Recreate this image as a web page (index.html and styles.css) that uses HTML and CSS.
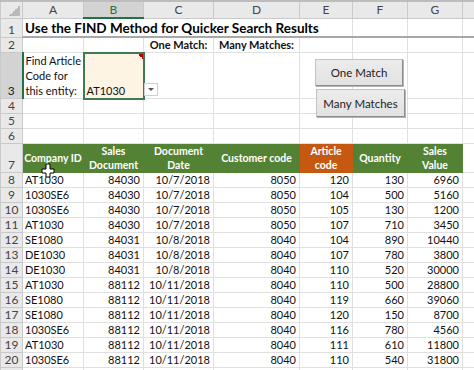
FILE: index.html
```html
<!DOCTYPE html>
<html lang="en">
<head>
    <meta charset="UTF-8">
    <title>FIND Method</title>
    <link rel="stylesheet" href="styles.css">
</head>
<body>
    <div class="sheet">
        <table class="grid">
            <colgroup>
                <col class="w-rh"><col class="w-a"><col class="w-b"><col class="w-c"><col class="w-d">
                <col class="w-e"><col class="w-f"><col class="w-g"><col class="w-h">
            </colgroup>
            <thead>
                <tr class="r-head">
                    <th class="corner"></th>
                    <th class="colh">A</th>
                    <th class="colh sel">B</th>
                    <th class="colh">C</th>
                    <th class="colh">D</th>
                    <th class="colh">E</th>
                    <th class="colh">F</th>
                    <th class="colh">G</th>
                    <th class="colh"></th>
                </tr>
            </thead>
            <tbody>
                <tr class="r-title">
                    <th class="rowh">1</th>
                    <td colspan="5" class="title">Use the FIND Method for Quicker Search Results</td>
                    <td></td><td></td><td></td>
                </tr>
                <tr class="r-std">
                    <th class="rowh">2</th>
                    <td></td><td></td>
                    <td class="label">One Match:</td>
                    <td class="label">Many Matches:</td>
                    <td></td><td></td><td></td><td></td>
                </tr>
                <tr class="r-input">
                    <th class="rowh sel">3</th>
                    <td class="wrap">Find Article<br>Code for<br>this entity:</td>
                    <td class="input">AT1030</td>
                    <td></td><td></td><td></td><td></td><td></td><td></td>
                </tr>
                <tr class="r-std">
                    <th class="rowh">4</th>
                    <td></td><td></td><td></td><td></td><td></td><td></td><td></td><td></td>
                </tr>
                <tr class="r-std">
                    <th class="rowh">5</th>
                    <td></td><td></td><td></td><td></td><td></td><td></td><td></td><td></td>
                </tr>
                <tr class="r-short">
                    <th class="rowh">6</th>
                    <td></td><td></td><td></td><td></td><td></td><td></td><td></td><td></td>
                </tr>
                <tr class="r-hdr">
                    <th class="rowh">7</th>
                    <td class="hd">Company ID</td>
                    <td class="hd">Sales<br>Document</td>
                    <td class="hd">Document<br>Date</td>
                    <td class="hd">Customer code</td>
                    <td class="hd key">Article<br>code</td>
                    <td class="hd">Quantity</td>
                    <td class="hd">Sales<br>Value</td>
                    <td></td>
                </tr>
                <tr class="r-std"><th class="rowh">8</th><td>AT1030</td><td class="n">84030</td><td class="n">10/7/2018</td><td class="n">8050</td><td class="n">120</td><td class="n">130</td><td class="n">6960</td><td></td></tr>
                <tr class="r-std"><th class="rowh">9</th><td>1030SE6</td><td class="n">84030</td><td class="n">10/7/2018</td><td class="n">8050</td><td class="n">104</td><td class="n">500</td><td class="n">5160</td><td></td></tr>
                <tr class="r-std"><th class="rowh">10</th><td>1030SE6</td><td class="n">84030</td><td class="n">10/7/2018</td><td class="n">8050</td><td class="n">105</td><td class="n">130</td><td class="n">1200</td><td></td></tr>
                <tr class="r-std"><th class="rowh">11</th><td>AT1030</td><td class="n">84030</td><td class="n">10/7/2018</td><td class="n">8050</td><td class="n">107</td><td class="n">710</td><td class="n">3450</td><td></td></tr>
                <tr class="r-std"><th class="rowh">12</th><td>SE1080</td><td class="n">84031</td><td class="n">10/8/2018</td><td class="n">8040</td><td class="n">104</td><td class="n">890</td><td class="n">10440</td><td></td></tr>
                <tr class="r-std"><th class="rowh">13</th><td>DE1030</td><td class="n">84031</td><td class="n">10/8/2018</td><td class="n">8040</td><td class="n">107</td><td class="n">780</td><td class="n">3800</td><td></td></tr>
                <tr class="r-std"><th class="rowh">14</th><td>DE1030</td><td class="n">84031</td><td class="n">10/8/2018</td><td class="n">8040</td><td class="n">110</td><td class="n">520</td><td class="n">30000</td><td></td></tr>
                <tr class="r-std"><th class="rowh">15</th><td>AT1030</td><td class="n">88112</td><td class="n">10/11/2018</td><td class="n">8040</td><td class="n">110</td><td class="n">500</td><td class="n">28800</td><td></td></tr>
                <tr class="r-std"><th class="rowh">16</th><td>SE1080</td><td class="n">88112</td><td class="n">10/11/2018</td><td class="n">8040</td><td class="n">119</td><td class="n">660</td><td class="n">39060</td><td></td></tr>
                <tr class="r-std"><th class="rowh">17</th><td>SE1080</td><td class="n">88112</td><td class="n">10/11/2018</td><td class="n">8040</td><td class="n">120</td><td class="n">150</td><td class="n">8700</td><td></td></tr>
                <tr class="r-std"><th class="rowh">18</th><td>1030SE6</td><td class="n">88112</td><td class="n">10/11/2018</td><td class="n">8040</td><td class="n">116</td><td class="n">780</td><td class="n">4560</td><td></td></tr>
                <tr class="r-std"><th class="rowh">19</th><td>AT1030</td><td class="n">88112</td><td class="n">10/11/2018</td><td class="n">8040</td><td class="n">111</td><td class="n">610</td><td class="n">11800</td><td></td></tr>
                <tr class="r-std"><th class="rowh">20</th><td>1030SE6</td><td class="n">88112</td><td class="n">10/11/2018</td><td class="n">8040</td><td class="n">110</td><td class="n">540</td><td class="n">31800</td><td></td></tr>
                <tr class="r-std"><th class="rowh"></th><td></td><td></td><td></td><td></td><td></td><td></td><td></td><td></td></tr>
            </tbody>
        </table>

        <!-- floating objects on the sheet -->
        <div class="dropdown"><span class="caret"></span></div>
        <button class="macro-btn btn-one">One Match</button>
        <button class="macro-btn btn-many">Many Matches</button>
        <svg class="cursor" width="14" height="15" viewBox="0 0 14 15">
            <path d="M5 1h4v5h4v4H9v4H5v-4H1V6h4z" fill="#fff" stroke="#000" stroke-width="1"/>
        </svg>
    </div>
</body>
</html>
```

FILE: styles.css
```css
body {
    margin: 0;
    background: #fff;
    font-family: Lato, "Liberation Sans", sans-serif;
    overflow: hidden;
}
.sheet {
    position: relative;
    width: 474px;
    height: 370px;
    overflow: hidden;
}
.grid {
    border-collapse: collapse;
    table-layout: fixed;
    width: 474px;
    font-size: 11px;
    color: #111;
}
.w-rh { width: 22px; }
.w-a { width: 61px; }
.w-b { width: 60px; }
.w-c { width: 70px; }
.w-d { width: 86px; }
.w-e { width: 53px; }
.w-f { width: 55px; }
.w-g { width: 55px; }
.w-h { width: 12px; }

td {
    border: 1px solid #e0e0e0;
    padding: 0 2px;
    white-space: nowrap;
    overflow: hidden;
    vertical-align: bottom;
    line-height: 14px;
}
td.n {
    text-align: right;
    padding-right: 3px;
}

/* headers */
.r-head { height: 17px; }
.corner {
    border: 1px solid #c9c9c9;
    border-top: 2px solid #bdbdbd;
    background: #e9e9e9 linear-gradient(to top left, #b9b9b9 50%, transparent 50%) no-repeat right 2px bottom 2px / 11px 11px;
}
.colh {
    background: #e9e9e9;
    border: 1px solid #c9c9c9;
    border-top: 2px solid #bdbdbd;
    color: #444;
    font-weight: normal;
    font-size: 12px;
    line-height: 14px;
    padding: 0;
}
.colh.sel {
    background: #d3d3d3;
    color: #217346;
    border-bottom: 2px solid #217346;
}
.rowh {
    background: #e9e9e9;
    border: 1px solid #c9c9c9;
    color: #444;
    font-weight: normal;
    font-size: 12px;
    line-height: 14px;
    text-align: center;
    vertical-align: bottom;
    padding: 0;
}
.rowh.sel {
    background: #d3d3d3;
    color: #222;
    border-right: 2px solid #217346;
}

/* rows */
.r-title { height: 19px; }
.r-std { height: 15px; }
.r-input { height: 46px; }
.r-short { height: 13px; }
.r-hdr { height: 28px; }

.r-title td {
    border-bottom: 2px solid #a8a8a8;
}
.title {
    font-size: 13.5px;
    font-weight: bold;
    color: #000;
    vertical-align: middle;
}
.label {
    font-weight: bold;
    text-align: center;
}
.wrap {
    line-height: 15px;
}
.input {
    background: #fdf4e3 linear-gradient(to bottom left, #c00000 50%, transparent 50%) no-repeat right top / 5px 5px;
    border: 2px solid #3f7a52;
}

.hd {
    background: #548235;
    border-color: #548235;
    color: #fff;
    font-size: 10.5px;
    font-weight: bold;
    text-align: center;
    vertical-align: middle;
    line-height: 14px;
    padding: 0;
}
.hd.key {
    background: #c65911;
    border-color: #c65911;
}

/* floating objects */
.dropdown {
    position: absolute;
    left: 144px;
    top: 83px;
    width: 12px;
    height: 11px;
    background: #fff;
    border: 1px solid #cfcfcf;
    display: flex;
    align-items: center;
    justify-content: center;
}
.caret {
    width: 0;
    height: 0;
    border-left: 3px solid transparent;
    border-right: 3px solid transparent;
    border-top: 3px solid #555;
}
.macro-btn {
    position: absolute;
    margin: 0;
    padding: 0;
    font-family: Lato, "Liberation Sans", sans-serif;
    font-size: 11.5px;
    color: #222;
    background: linear-gradient(#ececec, #e2e2e2);
    border: 1px solid #c3c3c3;
    border-right-color: #8d8d8d;
    border-bottom-color: #8d8d8d;
    box-shadow: 1px 1px 0 #b5b5b5;
}
.btn-one {
    left: 315px;
    top: 59px;
    width: 88px;
    height: 27px;
}
.btn-many {
    left: 316px;
    top: 89px;
    width: 89px;
    height: 28px;
}
.cursor {
    position: absolute;
    left: 41px;
    top: 163px;
}
```
